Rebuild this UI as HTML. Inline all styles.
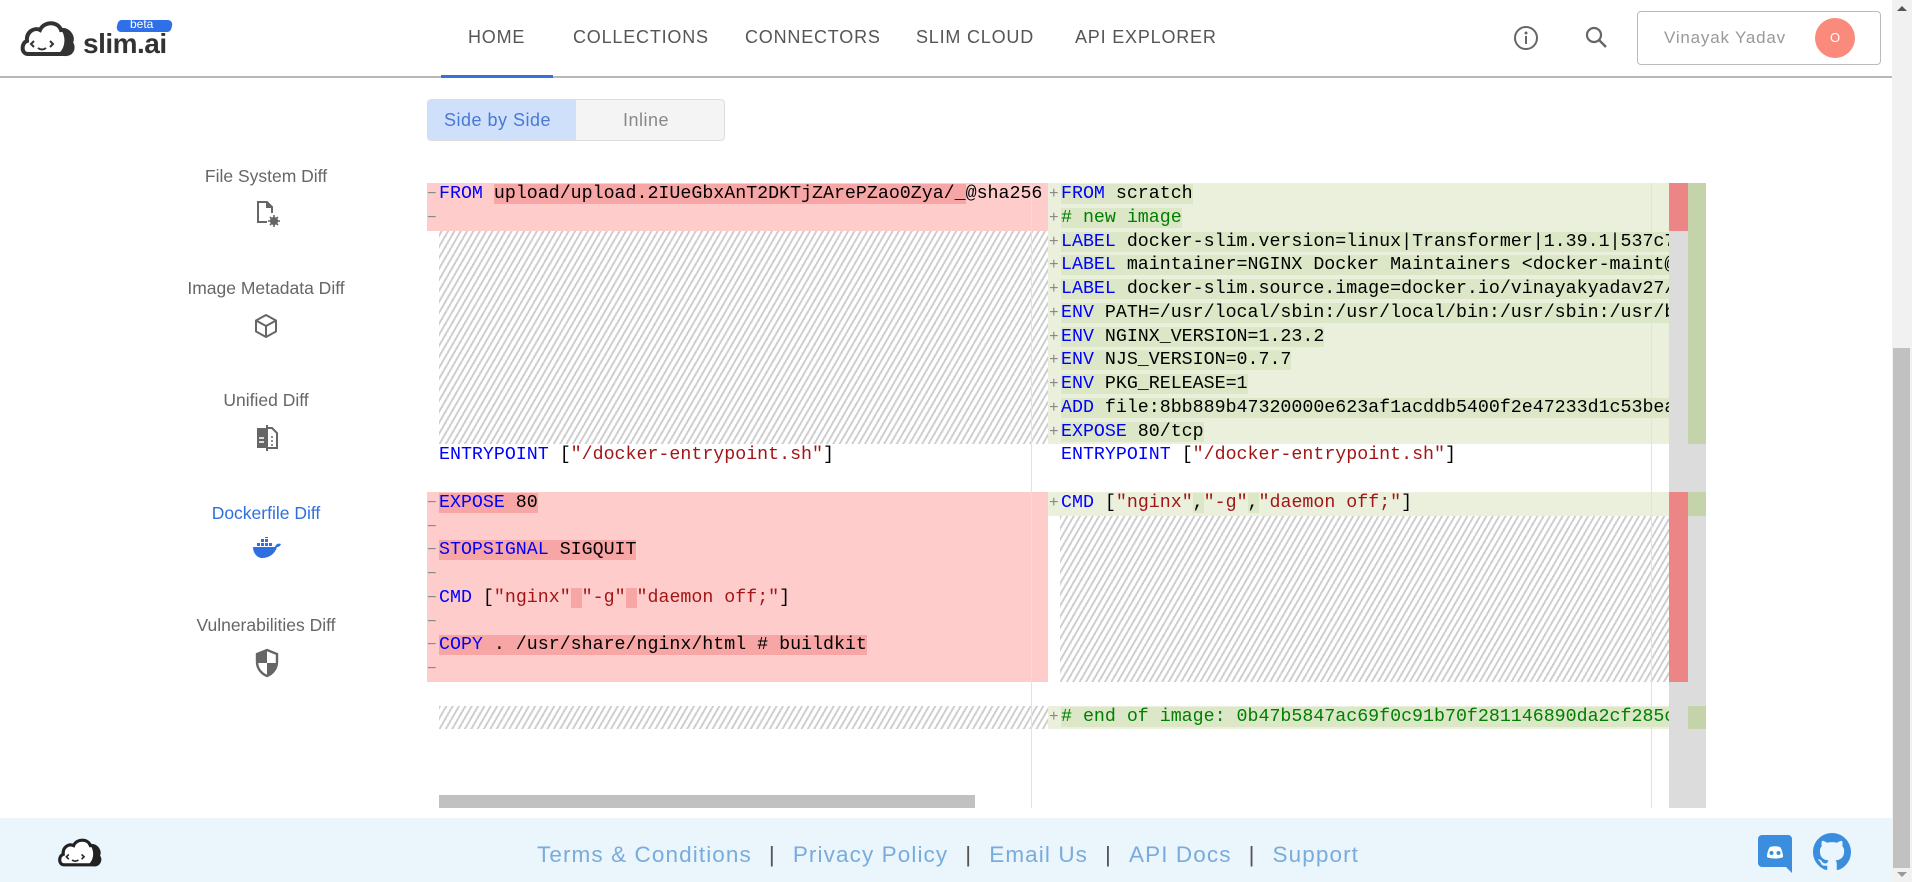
<!DOCTYPE html>
<html><head><meta charset="utf-8"><style>
*{margin:0;padding:0;box-sizing:border-box}
body{width:1912px;height:882px;overflow:hidden;background:#fff;font-family:"Liberation Sans",sans-serif;position:relative}
.abs{position:absolute}
.nav{position:absolute;top:27px;font-size:18px;color:#555;letter-spacing:.8px}
.side{position:absolute;width:240px;left:146px;text-align:center;font-size:17.5px;color:#666}
.code{position:absolute;font-family:"Liberation Mono",monospace;font-size:18.3px;line-height:23.75px;height:23.75px;white-space:pre;overflow:hidden;color:#000}
.k{color:#0000ff}.s{color:#a31515}.c{color:#008000}
.rl{background:#ffcccc}.rh{background:#f8a5a5}
.gl{background:#eaf0dc}.gh{background:#dbe7c7}
.hatch{position:absolute;background:repeating-linear-gradient(-60deg,#fff 0 3.5px,#cfcfcf 3.5px 5.5px)}
.g{position:absolute;font-family:"Liberation Mono",monospace;font-size:16px;line-height:23.75px;color:#888}
.foot a{color:#79acdb;text-decoration:none}
.foot span{color:#555;margin:0 17px}
</style></head><body>
<div class="abs" style="left:0;top:0;width:1892px;height:78px;border-bottom:2px solid #b8b8b8;background:#fff"></div>
<svg class="abs" style="left:20px;top:18px" width="56" height="40" viewBox="0 0 56 40">
<path d="M8 36 C1 36 1 25 7 23 C6 14 14 9 20 12 C24 3 38 3 41 12 C48 11 54 18 51 25 C55 30 51 37 45 36 Z" fill="#fff" stroke="#333" stroke-width="4"/>
<path d="M41 12 C48 11 54 18 51 25 C55 30 51 37 45 36 L38 36 C46 30 46 18 41 12Z" fill="#333"/>
<path d="M14 23 l-3 3 3 3 M30 23 l3 3 -3 3 M18 30 q4 3 8 0" stroke="#333" stroke-width="2" fill="none"/>
</svg>
<div class="abs" style="left:117px;top:20px;width:55px;height:12px;background:#2f6fe8;border-radius:3px 6px 3px 6px;transform:skewX(-15deg)"></div>
<div class="abs" style="left:130px;top:17px;font-size:12px;color:#fff;">beta</div>
<div class="abs" style="left:83px;top:28px;font-size:28px;font-weight:bold;color:#333;letter-spacing:-.5px">slim.ai</div>
<div class="nav" style="left:468px">HOME</div>
<div class="abs" style="left:441px;top:75px;width:112px;height:3px;background:#3a6fd8"></div>
<div class="nav" style="left:573px">COLLECTIONS</div>
<div class="nav" style="left:745px">CONNECTORS</div>
<div class="nav" style="left:916px">SLIM CLOUD</div>
<div class="nav" style="left:1075px">API EXPLORER</div>
<svg class="abs" style="left:1512px;top:24px" width="28" height="28" viewBox="0 0 28 28"><circle cx="14" cy="14" r="11" fill="none" stroke="#666" stroke-width="2"/><circle cx="14" cy="9" r="1.5" fill="#666"/><path d="M14 12v8" stroke="#666" stroke-width="2"/></svg>
<svg class="abs" style="left:1583px;top:24px" width="28" height="28" viewBox="0 0 28 28"><circle cx="11" cy="11" r="7" fill="none" stroke="#666" stroke-width="2.2"/><path d="M16 16l7 7" stroke="#666" stroke-width="2.4"/></svg>
<div class="abs" style="left:1637px;top:11px;width:244px;height:54px;border:1px solid #bbb;border-radius:4px"></div>
<div class="abs" style="left:1664px;top:28px;font-size:17px;color:#999;letter-spacing:.8px">Vinayak Yadav</div>
<div class="abs" style="left:1815px;top:18px;width:40px;height:40px;border-radius:50%;background:#fa8a7b;color:#fff;font-size:13px;text-align:center;line-height:40px">O</div>
<div class="abs" style="left:1892px;top:0;width:20px;height:882px;background:#f1f1f1"></div>
<div class="abs" style="left:1893px;top:348px;width:17px;height:520px;background:#c1c1c1"></div>
<div class="abs" style="left:1897px;top:6px;width:0;height:0;border-left:5px solid transparent;border-right:5px solid transparent;border-bottom:5px solid #555"></div>
<div class="abs" style="left:1897px;top:872px;width:0;height:0;border-left:5px solid transparent;border-right:5px solid transparent;border-top:5px solid #999"></div>
<div class="abs" style="left:427px;top:99px;width:298px;height:42px;border:1px solid #ddd;border-radius:4px;background:#f4f4f4;overflow:hidden">
<div style="position:absolute;left:0;top:0;width:148px;height:42px;background:#cfe0fb"></div></div>
<div class="abs" style="left:444px;top:110px;font-size:18px;color:#4a78d6;letter-spacing:.5px">Side by Side</div>
<div class="abs" style="left:623px;top:110px;font-size:18px;color:#888;letter-spacing:.5px">Inline</div>
<div class="side" style="top:166px">File System Diff</div>
<svg class="abs" style="left:254px;top:199px" width="30" height="30" viewBox="0 0 30 30"><path d="M13 23H4V3h9l5 5v6" fill="none" stroke="#666" stroke-width="2"/><path d="M13 3v5h5" fill="#666" stroke="#666" stroke-width="2"/><circle cx="20" cy="22" r="4" fill="#666"/><circle cx="20" cy="22" r="1.3" fill="#fff"/><path d="M20 16v12M14 22h12M16 18l8 8M24 18l-8 8" stroke="#666" stroke-width="1.6"/></svg>
<div class="side" style="top:278px">Image Metadata Diff</div>
<svg class="abs" style="left:253px;top:313px" width="26" height="26" viewBox="0 0 26 26"><path d="M13 2L23 7.5V18.5L13 24L3 18.5V7.5Z M3 7.5L13 13L23 7.5 M13 13V24" fill="none" stroke="#666" stroke-width="2" stroke-linejoin="round"/></svg>
<div class="side" style="top:390px">Unified Diff</div>
<svg class="abs" style="left:254px;top:424px" width="26" height="28" viewBox="0 0 26 28"><path d="M3 4h9v20H3z" fill="#666"/><path d="M13 1v26" stroke="#666" stroke-width="2"/><path d="M14 4h4l5 5v15h-9" fill="none" stroke="#666" stroke-width="2"/><path d="M5 14h5M5 18h5" stroke="#fff" stroke-width="1.5"/><path d="M18 12v2M18 16v2M18 20v2" stroke="#666" stroke-width="1.5"/></svg>
<div class="side" style="top:503px;color:#2f6fe0">Dockerfile Diff</div>
<svg class="abs" style="left:252px;top:537px" width="30" height="22" viewBox="0 0 30 22"><path d="M1 10h22c1-3 3-4 6-3-1 2-2 3-4 3-2 7-8 11-15 11C5 21 1 16 1 10z" fill="#2f6fe0"/><g fill="#2f6fe0"><rect x="5" y="6" width="3" height="3"/><rect x="9" y="6" width="3" height="3"/><rect x="13" y="6" width="3" height="3"/><rect x="9" y="2" width="3" height="3"/><rect x="13" y="2" width="3" height="3"/><rect x="13" y="-1" width="3" height="2"/><rect x="17" y="6" width="3" height="3"/></g></svg>
<div class="side" style="top:615px">Vulnerabilities Diff</div>
<svg class="abs" style="left:254px;top:648px" width="26" height="30" viewBox="0 0 26 30"><path d="M13 2L23 6V14C23 21 18 26 13 28C8 26 3 21 3 14V6Z" fill="none" stroke="#666" stroke-width="2.4"/><path d="M13 2V15H3V6Z M13 15H23C23 21 18 26 13 28Z" fill="#666"/></svg>
<div class="abs rl" style="left:427px;top:183px;width:621px;height:47.5px"></div>
<div class="abs rl" style="left:427px;top:491.75px;width:621px;height:190px"></div>
<div class="abs gl" style="left:1048px;top:183px;width:621px;height:261.25px"></div>
<div class="abs gl" style="left:1048px;top:491.75px;width:621px;height:23.75px"></div>
<div class="abs gl" style="left:1048px;top:705.5px;width:621px;height:23.75px"></div>
<div class="hatch" style="left:439px;top:230.5px;width:609px;height:213.75px"></div>
<div class="hatch" style="left:1060px;top:515.5px;width:609px;height:166.25px"></div>
<div class="hatch" style="left:439px;top:705.5px;width:609px;height:23.75px"></div>
<div class="abs" style="left:1031px;top:183px;width:1px;height:625px;background:#e2e2e2"></div>
<div class="abs" style="left:1651px;top:183px;width:1px;height:625px;background:#e2e2e2"></div>
<div class="abs" style="left:1669px;top:183px;width:37px;height:625px;background:#dcdcdc"></div>
<div class="abs" style="left:1669px;top:183px;width:19px;height:47.5px;background:#ec8585"></div>
<div class="abs" style="left:1669px;top:491.75px;width:19px;height:190px;background:#ec8585"></div>
<div class="abs" style="left:1688px;top:183px;width:18px;height:261.25px;background:#c5d3aa"></div>
<div class="abs" style="left:1688px;top:491.75px;width:18px;height:23.75px;background:#c5d3aa"></div>
<div class="abs" style="left:1688px;top:705.5px;width:18px;height:23.75px;background:#c5d3aa"></div>
<div class="abs" style="left:439px;top:795px;width:536px;height:13px;background:#c1c1c1"></div>
<div class="g" style="left:427px;top:183px">−<br>−</div>
<div class="g" style="left:427px;top:491.75px">−<br>−<br>−<br>−<br>−<br>−<br>−<br>−</div>
<div class="g" style="left:1049px;top:183px">+<br>+<br>+<br>+<br>+<br>+<br>+<br>+<br>+<br>+<br>+</div>
<div class="g" style="left:1049px;top:491.75px">+</div>
<div class="g" style="left:1049px;top:705.5px">+</div>
<div class="code" style="left:439px;top:183px;width:609px"><span class="k">FROM</span> <span class="rh">upload/upload.2IUeGbxAnT2DKTjZArePZao0Zya/_</span>@sha256</div>
<div class="code" style="left:439px;top:444.25px;width:592px"><span class="k">ENTRYPOINT</span> [<span class="s">"/docker-entrypoint.sh"</span>]</div>
<div class="code" style="left:439px;top:491.75px"><span class="rh"><span class="k">EXPOSE</span> 80</span></div>
<div class="code" style="left:439px;top:539.25px"><span class="rh"><span class="k">STOPSIGNAL</span> SIGQUIT</span></div>
<div class="code" style="left:439px;top:586.75px"><span class="k">CMD</span> [<span class="s">"nginx"</span><span class="rh"> </span><span class="s">"-g"</span><span class="rh"> </span><span class="s">"daemon off;"</span>]</div>
<div class="code" style="left:439px;top:634.25px"><span class="rh"><span class="k">COPY</span> . /usr/share/nginx/html # buildkit</span></div>
<div class="code" style="left:1061px;top:183px;width:608px"><span class="gh"><span class="k">FROM</span> scratch</span></div>
<div class="code" style="left:1061px;top:206.75px;width:608px"><span class="gh c"># new image</span></div>
<div class="code" style="left:1061px;top:230.5px;width:608px"><span class="gh"><span class="k">LABEL</span> docker-slim.version=linux|Transformer|1.39.1|537c7e8|2022-11-14</span></div>
<div class="code" style="left:1061px;top:254.25px;width:608px"><span class="gh"><span class="k">LABEL</span> maintainer=NGINX Docker Maintainers &lt;docker-maint@nginx.com&gt;</span></div>
<div class="code" style="left:1061px;top:278px;width:608px"><span class="gh"><span class="k">LABEL</span> docker-slim.source.image=docker.io/vinayakyadav27/nginx</span></div>
<div class="code" style="left:1061px;top:301.75px;width:608px"><span class="gh"><span class="k">ENV</span> PATH=/usr/local/sbin:/usr/local/bin:/usr/sbin:/usr/bin:/sbin:/bin</span></div>
<div class="code" style="left:1061px;top:325.5px;width:608px"><span class="gh"><span class="k">ENV</span> NGINX_VERSION=1.23.2</span></div>
<div class="code" style="left:1061px;top:349.25px;width:608px"><span class="gh"><span class="k">ENV</span> NJS_VERSION=0.7.7</span></div>
<div class="code" style="left:1061px;top:373px;width:608px"><span class="gh"><span class="k">ENV</span> PKG_RELEASE=1</span></div>
<div class="code" style="left:1061px;top:396.75px;width:608px"><span class="gh"><span class="k">ADD</span> file:8bb889b47320000e623af1acddb5400f2e47233d1c53bea12345 in /</span></div>
<div class="code" style="left:1061px;top:420.5px;width:608px"><span class="gh"><span class="k">EXPOSE</span> 80/tcp</span></div>
<div class="code" style="left:1061px;top:444.25px;width:590px"><span class="k">ENTRYPOINT</span> [<span class="s">"/docker-entrypoint.sh"</span>]</div>
<div class="code" style="left:1061px;top:491.75px;width:608px"><span class="k">CMD</span> [<span class="s">"nginx"</span><span class="gh">,</span><span class="s">"-g"</span><span class="gh">,</span><span class="s">"daemon off;"</span>]</div>
<div class="code" style="left:1061px;top:705.5px;width:608px"><span class="gh c"># end of image: 0b47b5847ac69f0c91b70f281146890da2cf285c1234567</span></div>
<div class="abs" style="left:0;top:818px;width:1892px;height:64px;background:#eaf5fc"></div>
<svg class="abs" style="left:54px;top:836px" width="52" height="32" viewBox="0 0 56 40">
<path d="M8 36 C1 36 1 25 7 23 C6 14 14 9 20 12 C24 3 38 3 41 12 C48 11 54 18 51 25 C55 30 51 37 45 36 Z" fill="#fff" stroke="#222" stroke-width="4"/>
<path d="M41 12 C48 11 54 18 51 25 C55 30 51 37 45 36 L38 36 C46 30 46 18 41 12Z" fill="#222"/>
<path d="M14 23 l-3 3 3 3 M30 23 l3 3 -3 3 M18 30 q4 3 8 0" stroke="#222" stroke-width="2" fill="none"/>
</svg>
<div class="abs foot" style="left:537px;top:842px;font-size:22.5px;white-space:nowrap;letter-spacing:1.1px"><a>Terms &amp; Conditions</a><span>|</span><a>Privacy Policy</a><span>|</span><a>Email Us</a><span>|</span><a>API Docs</a><span>|</span><a>Support</a></div>
<svg class="abs" style="left:1758px;top:835px" width="34" height="38" viewBox="0 0 34 38"><path d="M4 0h26a4 4 0 0 1 4 4v34l-6-6H4a4 4 0 0 1-4-4V4a4 4 0 0 1 4-4z" fill="#3b8ede"/><path d="M9 22c3 2 13 2 16 0 0-5-2-9-3-10-3-1-7-1-10 0-1 1-3 5-3 10z" fill="#fff"/><circle cx="13.5" cy="18" r="2" fill="#3b8ede"/><circle cx="20.5" cy="18" r="2" fill="#3b8ede"/></svg>
<svg class="abs" style="left:1813px;top:833px" width="38" height="38" viewBox="0 0 16 16"><path fill="#3b8ede" d="M8 0C3.58 0 0 3.58 0 8c0 3.540 2.29 6.53 5.47 7.59.4.07.55-.17.55-.38 0-.19-.01-.82-.01-1.49-2.01.37-2.530-.49-2.69-.94-.09-.23-.48-.94-.82-1.13-.28-.15-.68-.52-.01-.53.63-.01 1.08.58 1.23.82.72 1.21 1.87.87 2.33.66.07-.52.28-.87.51-1.07-1.78-.2-3.64-.89-3.64-3.95 0-.87.31-1.59.82-2.15-.08-.2-.36-1.02.08-2.12 0 0 .67-.21 2.2.82.64-.18 1.32-.27 2-.27.68 0 1.36.09 2 .27 1.53-1.04 2.2-.82 2.2-.82.44 1.1.16 1.92.08 2.12.51.56.82 1.27.82 2.15 0 3.07-1.870 3.75-3.65 3.95.29.25.54.73.54 1.48 0 1.07-.01 1.93-.01 2.2 0 .21.15.46.55.38A8.013 8.013 0 0016 8c0-4.42-3.58-8-8-8z"/></svg>
</body></html>
